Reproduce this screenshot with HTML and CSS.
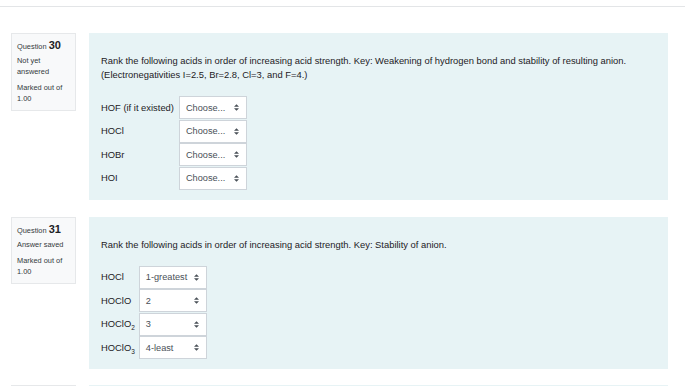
FILE: index.html
```html
<!DOCTYPE html>
<html>
<head>
<meta charset="utf-8">
<link rel="stylesheet" href="styles.css">
</head>
<body>
<div class="page">
  <div class="topline"></div>

  <div class="question q1">
    <div class="info">
      <div class="qno">Question <b>30</b></div>
      <div class="state">Not yet answered</div>
      <div class="grade">Marked out of 1.00</div>
    </div>
    <div class="content">
      <p class="qtext">Rank the following acids in order of increasing acid strength. Key: Weakening of hydrogen bond and stability of resulting anion. (Electronegativities I=2.5, Br=2.8, Cl=3, and F=4.)</p>
      <div class="answers">
        <div class="label">HOF (if it existed)</div>
        <div class="select"><span>Choose...</span><svg class="arrow" viewBox="0 0 6 8" width="5" height="7"><path d="M3 0 L6 3 L0 3 Z M0 5 L6 5 L3 8 Z" fill="#495057"/></svg></div>
        <div class="label">HOCl</div>
        <div class="select"><span>Choose...</span><svg class="arrow" viewBox="0 0 6 8" width="5" height="7"><path d="M3 0 L6 3 L0 3 Z M0 5 L6 5 L3 8 Z" fill="#495057"/></svg></div>
        <div class="label">HOBr</div>
        <div class="select"><span>Choose...</span><svg class="arrow" viewBox="0 0 6 8" width="5" height="7"><path d="M3 0 L6 3 L0 3 Z M0 5 L6 5 L3 8 Z" fill="#495057"/></svg></div>
        <div class="label">HOI</div>
        <div class="select"><span>Choose...</span><svg class="arrow" viewBox="0 0 6 8" width="5" height="7"><path d="M3 0 L6 3 L0 3 Z M0 5 L6 5 L3 8 Z" fill="#495057"/></svg></div>
      </div>
    </div>
  </div>

  <div class="question q2">
    <div class="info">
      <div class="qno">Question <b>31</b></div>
      <div class="state">Answer saved</div>
      <div class="grade">Marked out of 1.00</div>
    </div>
    <div class="content">
      <p class="qtext">Rank the following acids in order of increasing acid strength. Key: Stability of anion.</p>
      <div class="answers">
        <div class="label">HOCl</div>
        <div class="select wide"><span>1-greatest</span><svg class="arrow" viewBox="0 0 6 8" width="5" height="7"><path d="M3 0 L6 3 L0 3 Z M0 5 L6 5 L3 8 Z" fill="#495057"/></svg></div>
        <div class="label">HOClO</div>
        <div class="select wide"><span>2</span><svg class="arrow" viewBox="0 0 6 8" width="5" height="7"><path d="M3 0 L6 3 L0 3 Z M0 5 L6 5 L3 8 Z" fill="#495057"/></svg></div>
        <div class="label">HOClO<sub>2</sub></div>
        <div class="select wide"><span>3</span><svg class="arrow" viewBox="0 0 6 8" width="5" height="7"><path d="M3 0 L6 3 L0 3 Z M0 5 L6 5 L3 8 Z" fill="#495057"/></svg></div>
        <div class="label">HOClO<sub>3</sub></div>
        <div class="select wide"><span>4-least</span><svg class="arrow" viewBox="0 0 6 8" width="5" height="7"><path d="M3 0 L6 3 L0 3 Z M0 5 L6 5 L3 8 Z" fill="#495057"/></svg></div>
      </div>
    </div>
  </div>

  <div class="question q3">
    <div class="info"></div>
    <div class="content"></div>
  </div>
</div>
</body>
</html>
```

FILE: styles.css
```css
html, body {
  margin: 0;
  padding: 0;
  background: #ffffff;
}

body {
  font-family: "Liberation Sans", Arial, sans-serif;
  color: #1d2125;
  font-size: 9.4px;
}

.page {
  padding-top: 6px;
  width: 700px;
  height: 386px;
  overflow: hidden;
}

.topline {
  width: 685px;
  border-top: 1px solid #e3e5e7;
}

.question {
  display: flex;
  align-items: flex-start;
  gap: 13px;
  padding-left: 11px;
}

.q1 { margin-top: 26px; }
.q2 { margin-top: 17px; }
.q3 { margin-top: 16px; }

.info {
  box-sizing: border-box;
  width: 65px;
  background: #f8f9fa;
  border: 1px solid #e6e8ea;
  padding: 4px 5px 6px 5px;
  font-size: 7.4px;
  line-height: 11px;
  color: #343a40;
}

.qno {
  font-size: 7.4px;
  line-height: 14px;
  margin-bottom: 1px;
}

.qno b {
  font-size: 11px;
  font-weight: bold;
  color: #1d2125;
}

.state {
  margin-bottom: 5px;
}

.content {
  box-sizing: border-box;
  width: 579px;
  background: #e7f3f5;
  padding: 21px 12px 10px 12px;
}

.q3 .content, .q3 .info {
  height: 60px;
}

.qtext {
  margin: 0 0 14px 0;
  line-height: 14px;
  font-size: 9.4px;
  padding-right: 20px;
}

.answers {
  display: grid;
  grid-template-columns: max-content max-content;
  column-gap: 5px;
  row-gap: 0.5px;
  align-items: center;
}

.q2 .answers {
  column-gap: 4px;
}

.label {
  font-size: 9.4px;
  line-height: 12px;
}

.label sub {
  font-size: 6.5px;
  line-height: 0;
}

.select {
  box-sizing: border-box;
  height: 23px;
  width: 68px;
  background: #ffffff;
  border: 1px solid #ced4da;
  display: flex;
  align-items: center;
  justify-content: space-between;
  padding: 0 7px 0 6px;
  color: #495057;
  font-size: 9.2px;
}

.arrow {
  display: block;
}
```
